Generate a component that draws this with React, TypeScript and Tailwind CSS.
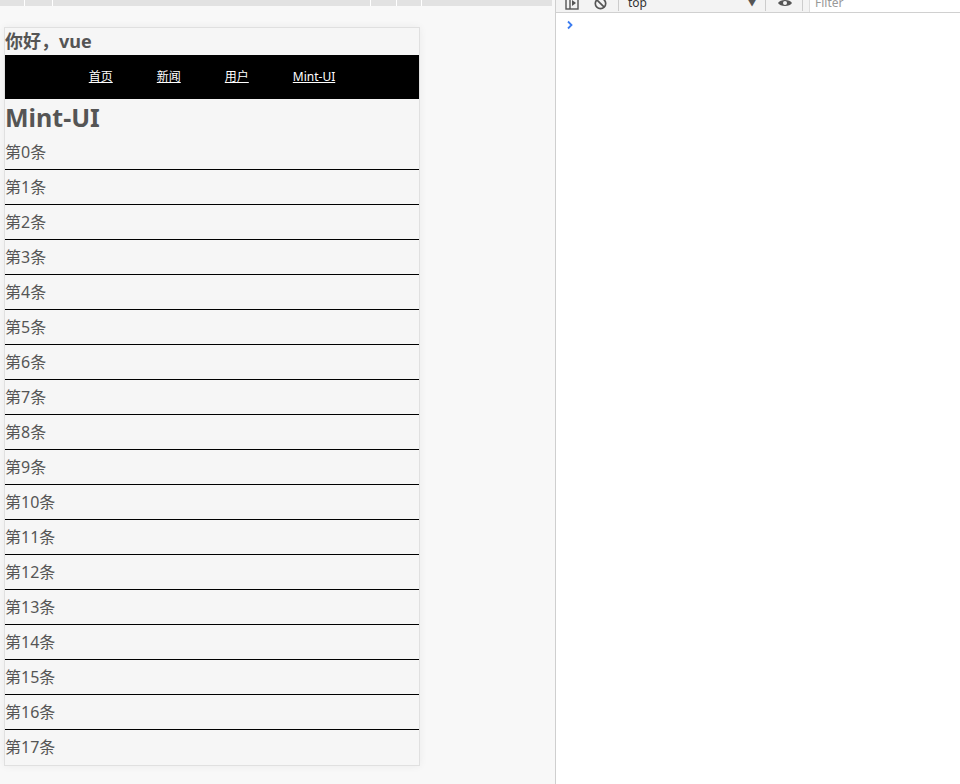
import React from 'react';

const NAV = ['首页', '新闻', '用户', 'Mint-UI'];
const ITEMS = Array.from({ length: 18 }, (_, i) => `第${i}条`);

// top strip of the (cropped) browser device toolbar
function DeviceBar() {
  return (
    <div className="flex h-[6px] w-[552px] shrink-0 bg-[#e2e2e2]">
      <div className="w-[25px] border-r border-white" />
      <div className="w-[28px] border-r border-white" />
      <div className="w-[318px] border-r border-white" />
      <div className="w-[26px] border-r border-white" />
      <div className="w-[25px] border-r border-white" />
      <div className="flex-1" />
    </div>
  );
}

function PhonePage() {
  return (
    <div className="ml-[4px] mt-[21px] w-[416px] border border-[#e0e0e0] bg-[#f6f6f6] shadow-[0_0_8px_rgba(0,0,0,0.06)]">
      <h1 className="h-[27px] text-[18px] font-bold leading-[27px] text-[#555]">你好，vue</h1>
      <nav className="flex h-[44px] items-center justify-center gap-[44px] bg-black">
        {NAV.map((n) => (
          <a key={n} href="#" className="text-[12px] leading-[16px] text-white underline">
            {n}
          </a>
        ))}
      </nav>
      <h2 className="h-[36px] text-[25px] font-bold leading-[37px] text-[#555]">Mint-UI</h2>
      <ul>
        {ITEMS.map((t, i) => (
          <li
            key={t}
            className={`h-[35px] text-[16px] leading-[34px] text-[#555] ${
              i < ITEMS.length - 1 ? 'border-b border-black' : ''
            }`}
          >
            {t}
          </li>
        ))}
      </ul>
    </div>
  );
}

function Console() {
  return (
    <div className="flex flex-1 flex-col border-l border-[#cfcfcf] bg-white">
      {/* toolbar, its upper half is scrolled off */}
      <div className="h-[13px] shrink-0 overflow-hidden border-b border-[#d0d0d0] bg-[#f3f3f3]">
        <div className="-mt-[9px] flex h-[24px] items-center text-[12px] text-[#333]">
          <svg className="ml-[9px] h-[14px] w-[14px]" viewBox="0 0 14 14" fill="none" stroke="#555" strokeWidth="1.4">
            <rect x="1" y="1" width="12" height="12" />
            <path d="M5 1v12" />
            <path d="M7 4l4 3-4 3z" fill="#555" stroke="none" />
          </svg>
          <svg className="ml-[15px] h-[13px] w-[13px]" viewBox="0 0 14 14" fill="none" stroke="#555" strokeWidth="1.8">
            <circle cx="7" cy="7" r="5.6" />
            <path d="M3 3l8 8" />
          </svg>
          <div className="ml-[11px] h-[16px] w-px bg-[#ccc]" />
          <span className="ml-[9px] w-[120px] leading-[24px]">top</span>
          <span className="text-[8px] text-[#555]">▼</span>
          <div className="ml-[9px] h-[16px] w-px bg-[#ccc]" />
          <svg className="ml-[12px] h-[14px] w-[14px]" viewBox="0 0 14 14">
            <path d="M0 7c2-4 12-4 14 0-2 4-12 4-14 0z" fill="#555" />
            <circle cx="7" cy="7" r="2" fill="#f3f3f3" />
          </svg>
          <div className="ml-[10px] h-[16px] w-px bg-[#ccc]" />
          <div className="ml-[6px] flex h-[24px] flex-1 items-center border-l border-[#ddd] bg-white pl-[5px] text-[#999]">
            Filter
          </div>
        </div>
      </div>
      <div className="pl-[10px] pt-[7px]">
        <svg className="h-[10px] w-[8px]" viewBox="0 0 8 10" fill="none" stroke="#3b7cf0" strokeWidth="1.8">
          <path d="M2 1.5l3.5 3.5-3.5 3.5" />
        </svg>
      </div>
    </div>
  );
}

export default function App() {
  return (
    <div
      className="flex h-[784px] w-[960px] overflow-hidden"
      style={{ fontFamily: '"Noto Sans", "Noto Sans CJK SC", sans-serif' }}
    >
      <div className="flex w-[555px] shrink-0 flex-col bg-[#f8f8f8]">
        <DeviceBar />
        <PhonePage />
      </div>
      <Console />
    </div>
  );
}
